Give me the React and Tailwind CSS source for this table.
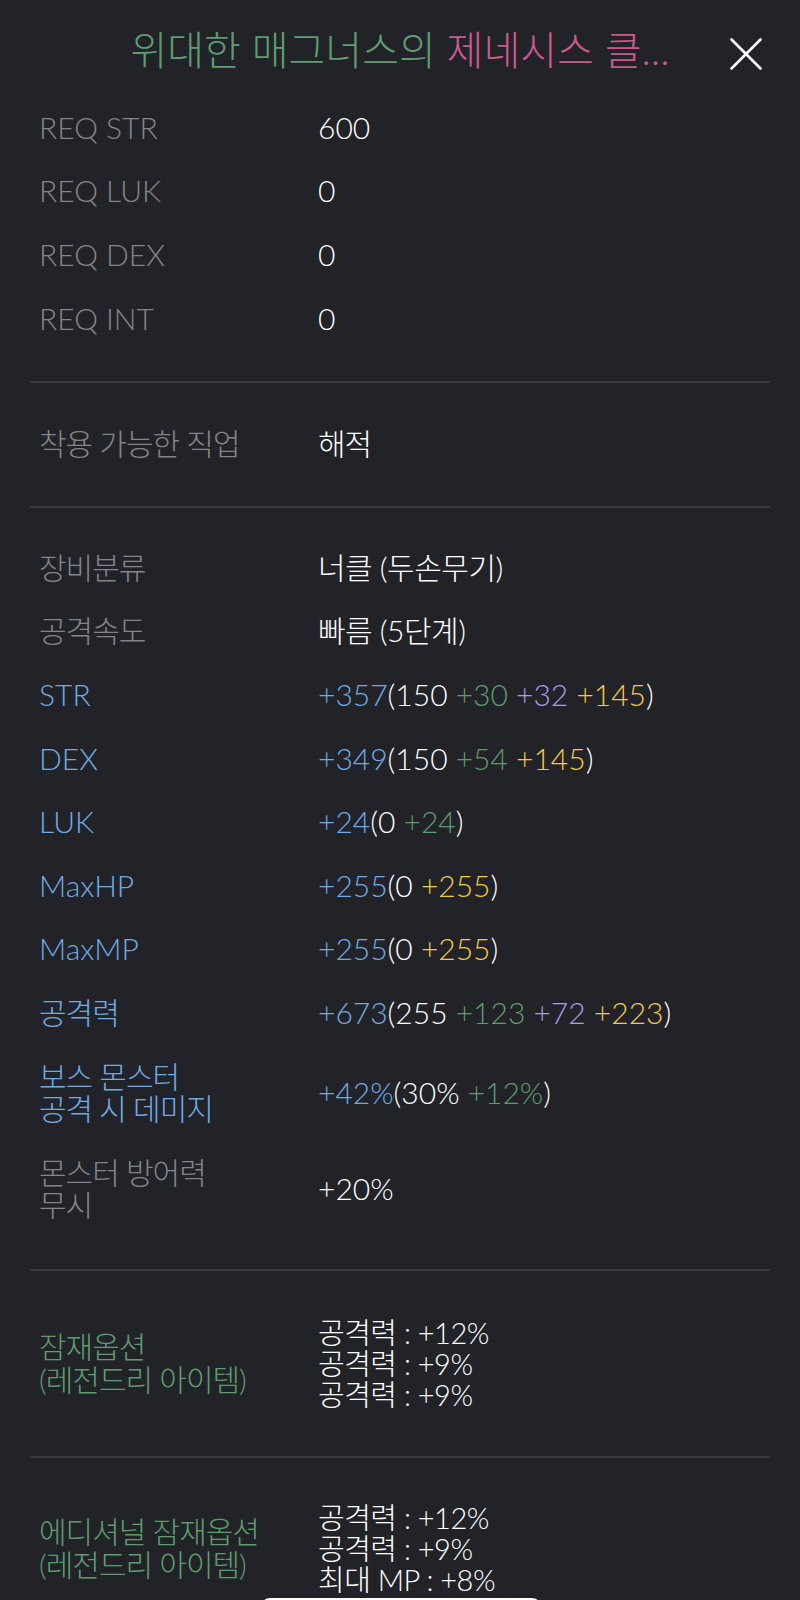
const font = { fontFamily: '"Lato", "Noto Sans CJK KR", sans-serif' };

const Blue = ({ children }) => <span className="text-[#70abe3]">{children}</span>;
const Green = ({ children }) => <span className="text-[#5f9c6d]">{children}</span>;
const Purple = ({ children }) => <span className="text-[#a99de6]">{children}</span>;
const Yellow = ({ children }) => <span className="text-[#f2cb45]">{children}</span>;

function Row({ label, value, labelClass = 'text-[#84858a]', tall = false, ko = false }) {
  return (
    <div className={`flex items-center pl-[9px] ${tall ? 'h-[96px]' : 'h-[63.6px]'}`}>
      <div className={`w-[279px] shrink-0 leading-[32px] ${ko ? 'tracking-[-1px]' : ''} ${labelClass}`}>{label}</div>
      <div className="leading-[32px] text-white">{value}</div>
    </div>
  );
}

export default function App() {
  return (
    <div style={font} className="relative min-h-[1600px] w-[800px] overflow-hidden bg-[#222328] text-[30px] font-light">
      <div className="relative flex h-[95px] items-center justify-center">
        <div className="pt-[4px] text-[40px] leading-none">
          <span className="text-[#5e9d71]">위대한 매그너스의 </span>
          <span className="text-[#cb5a8c]">제네시스 클...</span>
        </div>
        <svg viewBox="0 0 32 32" className="absolute left-[730px] top-[38px] h-[32px] w-[32px]" fill="none" stroke="white" strokeWidth="2.6" strokeLinecap="round">
          <line x1="1.5" y1="1.5" x2="30.5" y2="30.5" />
          <line x1="30.5" y1="1.5" x2="1.5" y2="30.5" />
        </svg>
      </div>

      <div className="px-[30px]">
        <div className="border-b-2 border-[#3a3b40] pb-[32px]">
          <Row label="REQ STR" value="600" />
          <Row label="REQ LUK" value="0" />
          <Row label="REQ DEX" value="0" />
          <Row label="REQ INT" value="0" />
        </div>

        <div className="border-b-2 border-[#3a3b40] pb-[31px] pt-[28px]">
          <Row ko label="착용 가능한 직업" value={<span className="tracking-[-1px]">해적</span>} />
        </div>

        <div className="border-b-2 border-[#3a3b40] pb-[33px] pt-[27px]">
          <Row ko label="장비분류" value={<span className="tracking-[-0.5px]">너클 (두손무기)</span>} />
          <Row ko label="공격속도" value={<span className="tracking-[-0.5px]">빠름 (5단계)</span>} />
          <Row
            label="STR"
            labelClass="text-[#70abe3]"
            value={<><Blue>+357</Blue>(150 <Green>+30</Green> <Purple>+32</Purple> <Yellow>+145</Yellow>)</>}
          />
          <Row
            label="DEX"
            labelClass="text-[#70abe3]"
            value={<><Blue>+349</Blue>(150 <Green>+54</Green> <Yellow>+145</Yellow>)</>}
          />
          <Row label="LUK" labelClass="text-[#70abe3]" value={<><Blue>+24</Blue>(0 <Green>+24</Green>)</>} />
          <Row label="MaxHP" labelClass="text-[#70abe3]" value={<><Blue>+255</Blue>(0 <Yellow>+255</Yellow>)</>} />
          <Row label="MaxMP" labelClass="text-[#70abe3]" value={<><Blue>+255</Blue>(0 <Yellow>+255</Yellow>)</>} />
          <Row
            ko
            label="공격력"
            labelClass="text-[#70abe3]"
            value={<><Blue>+673</Blue>(255 <Green>+123</Green> <Purple>+72</Purple> <Yellow>+223</Yellow>)</>}
          />
          <Row
            tall
            ko
            label={<>보스 몬스터<br />공격 시 데미지</>}
            labelClass="text-[#70abe3]"
            value={<><Blue>+42%</Blue>(30% <Green>+12%</Green>)</>}
          />
          <Row tall ko label={<>몬스터 방어력<br />무시</>} value="+20%" />
        </div>

        <div className="flex items-center border-b-2 border-[#3a3b40] py-[46px] pl-[9px]">
          <div className="w-[279px] shrink-0 leading-[33px] tracking-[-1px] text-[#5f9c6d]">
            잠재옵션<br />(레전드리 아이템)
          </div>
          <div className="text-[29px] leading-[31px] tracking-[-0.5px] text-white">
            공격력 : +12%<br />공격력 : +9%<br />공격력 : +9%
          </div>
        </div>

        <div className="flex items-center py-[44px] pl-[9px]">
          <div className="w-[279px] shrink-0 leading-[33px] tracking-[-1px] text-[#5f9c6d]">
            에디셔널 잠재옵션<br />(레전드리 아이템)
          </div>
          <div className="text-[29px] leading-[31px] tracking-[-0.5px] text-white">
            공격력 : +12%<br />공격력 : +9%<br />최대 MP : +8%
          </div>
        </div>
      </div>

      <div className="absolute left-[260px] top-[1598px] h-[10px] w-[282px] rounded-t-[10px] bg-white" />
    </div>
  );
}
